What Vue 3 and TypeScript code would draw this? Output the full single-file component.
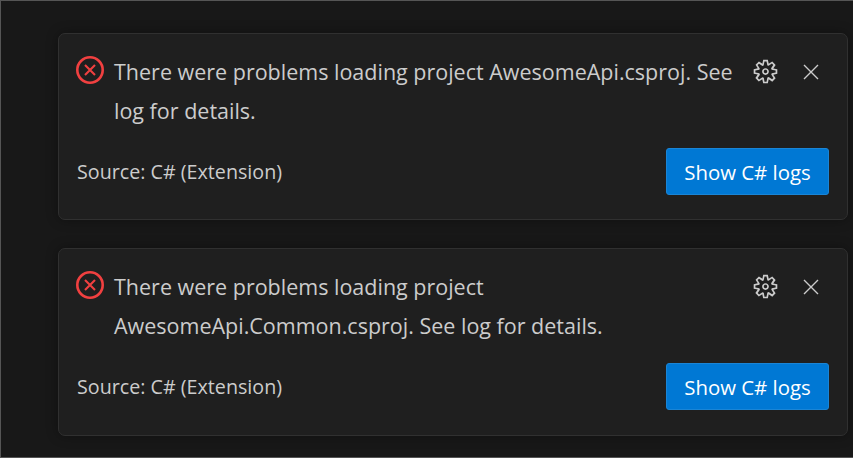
<template>
  <div class="window">
    <div v-for="note in notifications" :key="note.id" class="toast">
      <div class="toast-main">
        <svg class="error-icon" viewBox="0 0 28 28" fill="none" stroke="#f14040">
          <circle cx="14" cy="14" r="12.7" stroke-width="2.6" />
          <path d="M9 9l10 10M19 9L9 19" stroke-width="2.1" />
        </svg>
        <p class="message">
          <span v-for="line in note.lines" :key="line" class="line">{{ line }}</span>
        </p>
        <div class="toast-actions">
          <svg class="gear" viewBox="0 0 16 16" fill="#cccccc">
            <path fill-rule="evenodd" clip-rule="evenodd" d="M9.1 4.4L8.6 2H7.4l-.5 2.4-.7.3-2-1.3-.9.8 1.3 2-.2.7-2.4.5v1.2l2.4.5.3.8-1.3 2 .8.8 2-1.3.8.3.4 2.3h1.2l.5-2.4.8-.3 2 1.3.8-.8-1.3-2 .3-.8 2.3-.4V7.4l-2.4-.5-.3-.8 1.3-2-.8-.8-2 1.3-.7-.2zM9.4 1l.5 2.4L12 2.1l2 2-1.4 2.1 2.4.4v2.8l-2.4.5L14 12l-2 2-2.1-1.4-.5 2.4H6.6l-.5-2.4L4 13.9l-2-2 1.4-2.1L1 9.4V6.6l2.4-.5L2.1 4l2-2 2.1 1.4.4-2.4h2.8zm.6 7c0 1.1-.9 2-2 2s-2-.9-2-2 .9-2 2-2 2 .9 2 2zM8 9c.6 0 1-.4 1-1s-.4-1-1-1-1 .4-1 1 .4 1 1 1z" />
          </svg>
          <svg class="close" viewBox="0 0 16 16" fill="none" stroke="#cccccc" stroke-width="1.4">
            <path d="M1 1l14 14M15 1L1 15" />
          </svg>
        </div>
      </div>
      <div class="toast-footer">
        <span class="source">Source: C# (Extension)</span>
        <button class="primary-btn">Show C# logs</button>
      </div>
    </div>
  </div>
</template>

<script setup lang="ts">
interface Notification {
  id: number;
  lines: string[];
}

const notifications: Notification[] = [
  { id: 1, lines: ['There were problems loading project AwesomeApi.csproj. See', 'log for details.'] },
  { id: 2, lines: ['There were problems loading project', 'AwesomeApi.Common.csproj. See log for details.'] },
];
</script>

<style>
html,
body {
  margin: 0;
  background: #181818;
}
</style>

<style scoped>
.window {
  box-sizing: border-box;
  width: 853px;
  height: 458px;
  padding: 32px 5px 0 57px;
  border: 1px solid #555555;
  border-right: none;
  background: #181818;
  display: flex;
  flex-direction: column;
  gap: 28px;
  font-family: 'Open Sans', sans-serif;
  overflow: hidden;
}

.toast {
  box-sizing: border-box;
  width: 790px;
  height: 187px;
  border: 1px solid #303030;
  border-radius: 7px;
  background: #1f1f1f;
  padding: 18px 18px 8px 18px;
  display: flex;
  flex-direction: column;
  justify-content: space-between;
  box-shadow: 0 0 12px rgba(0, 0, 0, 0.35);
}

.toast:last-child {
  height: 188px;
  padding-bottom: 9px;
}

.toast-main {
  display: flex;
  align-items: flex-start;
}

.error-icon {
  width: 28px;
  height: 28px;
  flex-shrink: 0;
  margin-top: 4px;
  margin-right: 10px;
  margin-left: -1px;
}

.message {
  flex: 1;
  margin: 0;
  font-size: 21.5px;
  line-height: 39px;
  color: #cccccc;
}

.line {
  display: block;
  white-space: nowrap;
}

.toast-actions {
  display: flex;
  align-items: center;
  gap: 24px;
  margin-top: 6px;
  margin-right: 10px;
}

.gear {
  width: 27px;
  height: 27px;
}

.close {
  width: 16px;
  height: 16px;
}

.toast-footer {
  display: flex;
  align-items: center;
  justify-content: space-between;
  margin-bottom: 16px;
}

.source {
  font-size: 19.7px;
  color: #cccccc;
}

.primary-btn {
  width: 163px;
  height: 47px;
  padding: 0;
  border: 1px solid #1a85d6;
  border-radius: 3px;
  background: #0078d4;
  color: #ffffff;
  font-family: inherit;
  font-size: 20.4px;
}
</style>
